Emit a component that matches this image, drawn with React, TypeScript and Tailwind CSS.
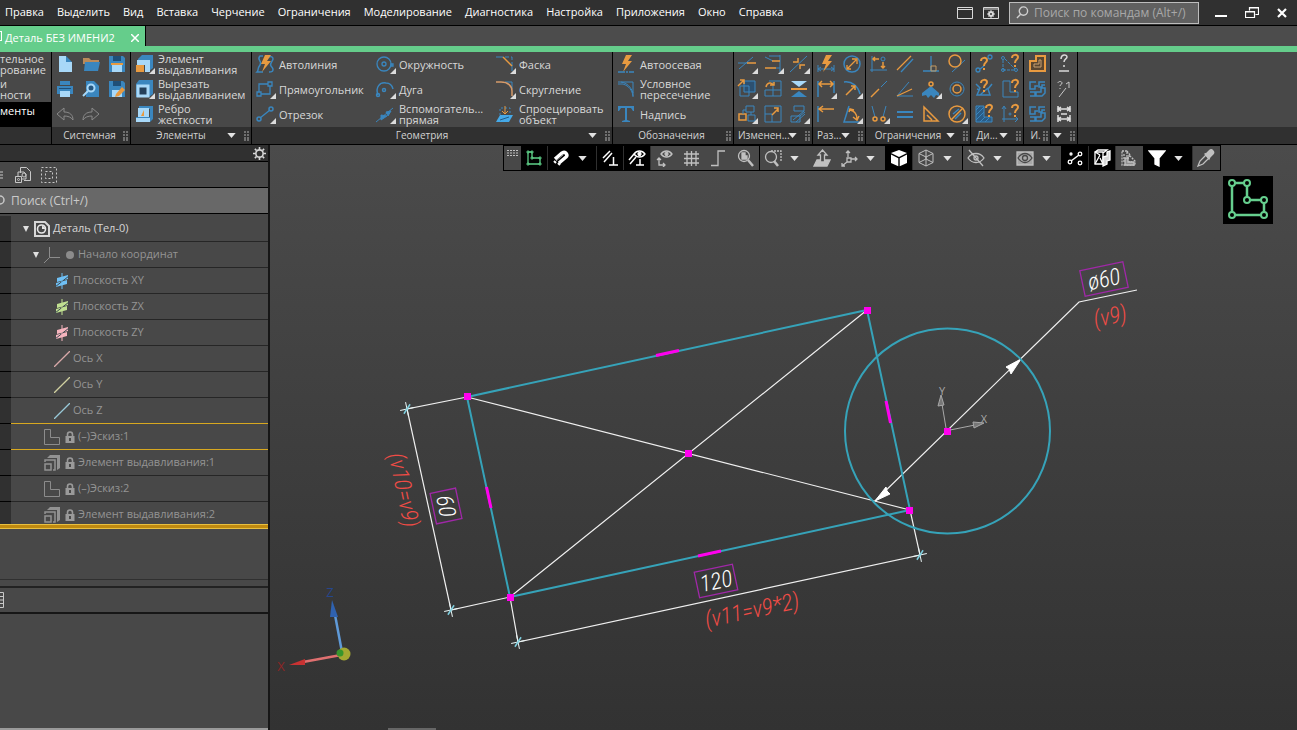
import { useState, type ReactNode } from "react";
import clsx from "clsx";

const BLUE = "#3a86be";
const ORANGE = "#e89a40";
const LIGHT = "#a8d8f8";

const MENU = [
  "Правка",
  "Выделить",
  "Вид",
  "Вставка",
  "Черчение",
  "Ограничения",
  "Моделирование",
  "Диагностика",
  "Настройка",
  "Приложения",
  "Окно",
  "Справка",
];

// Ribbon icons, drawn on a 24x24 grid
const bolt = <path d="M12 3h6l-4 6h4L9 20l3-8H8z" fill={ORANGE} stroke="none" />;
const ask = (
  <path d="M14 6c0-4 6-4 6-1 0 3-3 2-3 6M17 13v2" stroke={ORANGE} strokeWidth="2" />
);

const icons: Record<string, ReactNode> = {
  newFile: (
    <g stroke="none">
      <path d="M6 4h7v6h6v10H6z" fill={LIGHT} />
      <path d="M13 4l6 6h-6z" fill={BLUE} />
    </g>
  ),
  open: (
    <g stroke="none">
      <path d="M4 6h6l2 2h8v4H4z" fill="#b98a5a" />
      <path d="M6 10h15l-2 9H5z" fill={BLUE} />
    </g>
  ),
  save: (
    <g stroke="none">
      <path d="M4 4h14l2 2v14H4z" fill={BLUE} />
      <path d="M8 4h8v5H8z" fill="#1f4f78" />
      <path d="M7 13h10v7H7z" fill={LIGHT} />
      <path d="M6 11h12v2H6z" fill={ORANGE} />
    </g>
  ),
  print: (
    <g stroke="none">
      <path d="M7 4h10v4H7z" fill={BLUE} />
      <path d="M4 9h16v8H4z" fill={BLUE} />
      <path d="M6 11h12v1H6z" fill="#1f4f78" />
      <path d="M7 14h10v6H7z" fill={LIGHT} />
    </g>
  ),
  preview: (
    <g>
      <path d="M7 4h8l5 5v11H7z" fill={BLUE} stroke="none" />
      <circle cx="12" cy="11" r="3.5" fill="#26567e" stroke={LIGHT} strokeWidth="2" />
      <path d="M9 14l-5 5" stroke={LIGHT} strokeWidth="2" />
    </g>
  ),
  saveAs: (
    <g stroke="none">
      <path d="M4 4h14l2 2v14H4z" fill={BLUE} />
      <path d="M8 4h8v5H8z" fill="#1f4f78" />
      <path d="M7 13h10v7H7z" fill={LIGHT} />
      <path d="M11 17l6-7 3 3-6 6-4 1z" fill={ORANGE} />
    </g>
  ),
  undo: <path d="M4 12l7-6v4c6 0 9 3 9 8-2-3-5-4-9-4v4z" stroke="#8a8a8a" />,
  redo: <path d="M20 12l-7-6v4c-6 0-9 3-9 8 2-3 5-4 9-4v4z" stroke="#8a8a8a" />,
  extrude: (
    <g stroke="none">
      <path d="M6 7l4-4h11v13l-4 3V8H6z" fill={BLUE} />
      <path d="M5 8h13v12h-5v-7H5z" fill={LIGHT} />
      <path d="M4 13h8v7H4z" fill={ORANGE} />
    </g>
  ),
  cut: (
    <g>
      <path d="M4 7l3-4h14v14l-4 3H4z" fill={BLUE} stroke="none" />
      <rect x="6" y="9" width="10" height="10" fill="#24405a" stroke={LIGHT} strokeWidth="3" />
    </g>
  ),
  rib: (
    <g stroke="none">
      <path d="M7 4h14v13l-3 3V7H7z" fill={BLUE} />
      <path d="M6 6h11v9h1v5H4v-5h2z" fill={LIGHT} />
      <path d="M9 14l3-6v6z" fill={ORANGE} />
      <path d="M4 15h14v1H4z" fill={BLUE} />
    </g>
  ),
  autoline: (
    <g>
      <path d="M10 4H7c-4 4 3 5 0 9s-1 5-3 7h6M16 20c6 0 4-4 2-6s2-5 2-7-2-3-4-2" stroke={BLUE} strokeWidth="1.5" />
      {bolt}
    </g>
  ),
  rect: (
    <g stroke={BLUE} strokeWidth="1.3">
      <path d="M6 7h11v10H6z" />
      <path d="M4 15h4v4H4zM15 5h4v4h-4z" fill="#484848" />
    </g>
  ),
  segment: (
    <g stroke={BLUE} strokeWidth="1.5">
      <path d="M7 16l10-8" />
      <circle cx="6" cy="17" r="2" />
      <circle cx="18" cy="7" r="2" />
    </g>
  ),
  circle: (
    <g stroke={BLUE} strokeWidth="1.3">
      <circle cx="11" cy="12" r="7" />
      <circle cx="11" cy="12" r="2" />
      <path d="M18 12h2v2h-2z" />
    </g>
  ),
  arc: (
    <g stroke={BLUE} strokeWidth="1.5">
      <path d="M5 18c-3-8 2-13 8-12 4 0 6 2 7 6" />
      <circle cx="5" cy="18" r="1.5" />
      <circle cx="11" cy="13" r="1.5" />
    </g>
  ),
  auxLine: (
    <g stroke={BLUE}>
      <path d="M3 20L20 6" />
      <path d="M8 13l6 1-6 4zM13 10l5-1-3 5z" fill={BLUE} />
    </g>
  ),
  chamfer: (
    <g>
      <path d="M12 5h7v10" stroke={BLUE} strokeDasharray="4 2" />
      <path d="M3 5h7M19 14v5" stroke={BLUE} />
      <path d="M10 5l9 9" stroke={ORANGE} strokeWidth="1.5" />
    </g>
  ),
  fillet: (
    <g>
      <path d="M12 5h7v7" stroke={BLUE} />
      <path d="M3 5h5c7 0 11 4 11 9v5" stroke="#d59a6a" strokeWidth="1.5" />
    </g>
  ),
  project: (
    <g>
      <path d="M7 13V6h10v6" stroke={BLUE} strokeDasharray="2 2" />
      <path d="M7 13h13l-4 7H3z" fill="#45a9e8" stroke="none" />
      <path d="M12 4v8M9 9l3 3 3-3" stroke={ORANGE} />
      <path d="M7 18l9-3" stroke="#205a86" />
    </g>
  ),
  autoAxis: (
    <g>
      {bolt}
      <path d="M4 20h16" stroke={BLUE} strokeWidth="1.5" strokeDasharray="7 1 2 1" />
    </g>
  ),
  crossing: (
    <g stroke={BLUE}>
      <path d="M4 5h15v15M4 7h5c6 2 9 6 10 12M7 5c6 1 10 5 12 11" />
    </g>
  ),
  text: <path d="M4 4h16v5h-1l-2-3h-4v12l3 1v1H8v-1l3-1V6H7L5 9H4z" fill={BLUE} stroke="none" />,
  trim: (
    <g>
      <path d="M4 17L18 5M3 11h10" stroke={BLUE} />
      <path d="M12 11h9" stroke={ORANGE} strokeWidth="1.5" />
    </g>
  ),
  extend: (
    <g>
      <path d="M4 5l8 4M19 3v17" stroke={BLUE} />
      <path d="M11 9h8M4 16h11" stroke={ORANGE} strokeWidth="1.5" />
      <path d="M15 16h4M8 4h11" stroke={BLUE} />
    </g>
  ),
  split: (
    <g>
      <path d="M3 20L20 4" stroke={BLUE} />
      <path d="M6 10h5V6M13 17v-4h5" stroke={ORANGE} strokeWidth="1.5" />
    </g>
  ),
  scaleCopy: (
    <g>
      <path d="M9 4h11v11H9z" fill="#2c5070" stroke={BLUE} />
      <path d="M5 9h9v10H5z" stroke={BLUE} />
      <path d="M3 9l6-6M5 3h4v4" stroke={ORANGE} strokeWidth="1.5" />
    </g>
  ),
  mirrorCopy: (
    <g>
      <path d="M8 4h12v15H4v-6h16M12 5v14" stroke={BLUE} />
      <path d="M5 10c1-5 6-5 7-2M9 8h4V5" stroke={ORANGE} strokeWidth="1.5" />
    </g>
  ),
  mirror: (
    <g stroke="none">
      <path d="M4 4h16l-8 6z" fill={LIGHT} />
      <path d="M4 20h16l-8-6z" fill={BLUE} />
      <path d="M4 11h16v2H4z" fill={ORANGE} />
    </g>
  ),
  copy: (
    <g>
      <path d="M11 4h8v6h-8zM13 13h7v6h-7z" stroke={BLUE} />
      <path d="M4 12h7v6H4z" stroke={ORANGE} strokeWidth="1.5" />
      <path d="M8 12V8h3M16 10v3" stroke={BLUE} />
    </g>
  ),
  scale: (
    <g>
      <path d="M4 4h16v16H4zM4 12h7v8" stroke={BLUE} />
      <path d="M11 13l6-6M13 6h4v4" stroke={ORANGE} strokeWidth="1.5" />
    </g>
  ),
  deform: (
    <g stroke={BLUE}>
      <path d="M7 4h10v5H7zM4 14h9v6H4zM17 9L6 18M18 12L9 20M13 14l5-4" />
    </g>
  ),
  autoDim: (
    <g>
      <path d="M4 13v7M20 13v7M4 17h16M7 15l-3 2 3 2M17 15l3 2-3 2" stroke={BLUE} />
      {bolt}
    </g>
  ),
  diameter: (
    <g>
      <circle cx="12" cy="12" r="8" stroke={BLUE} strokeWidth="1.5" />
      <path d="M7 17l9-9M12 7h5v5M7 13v4h4" stroke={ORANGE} strokeWidth="1.3" />
    </g>
  ),
  linearDim: (
    <g>
      <path d="M4 4v16M20 4v12" stroke={BLUE} strokeWidth="1.5" />
      <path d="M5 7h14M8 4L5 7l3 3M16 4l3 3-3 3" stroke={ORANGE} strokeWidth="1.5" />
    </g>
  ),
  radialDim: (
    <g>
      <path d="M4 5c8-1 14 4 16 12" stroke={BLUE} strokeWidth="1.5" />
      <path d="M6 18l9-9M11 9h4v4" stroke={ORANGE} strokeWidth="1.5" />
    </g>
  ),
  heightDim: (
    <g>
      <path d="M4 4v16" stroke={BLUE} strokeWidth="1.5" />
      <path d="M5 7h15M9 4L5 7l4 3" stroke={ORANGE} strokeWidth="1.5" />
    </g>
  ),
  angleDim: (
    <g>
      <path d="M9 4L4 20h15" stroke={BLUE} strokeWidth="1.5" />
      <path d="M10 8c5 1 7 5 7 9M9 10l1-3 4 1M13 15l4 3 2-4" stroke={ORANGE} strokeWidth="1.5" />
    </g>
  ),
  alignPoints: (
    <g>
      <path d="M5 4v16M3 18h17" stroke={BLUE} />
      <path d="M6 7h6M8 5L6 7l2 2M16 10v6M14 14l2 2 2-2" stroke={ORANGE} strokeWidth="1.5" />
      <circle cx="16" cy="7" r="2" stroke={BLUE} />
    </g>
  ),
  parallel: (
    <g>
      <path d="M4 18L18 4" stroke={ORANGE} strokeWidth="1.3" />
      <path d="M8 20L20 7" stroke={BLUE} strokeWidth="1.3" />
    </g>
  ),
  perpendicular: (
    <g>
      <path d="M12 4v15M4 19h16" stroke={BLUE} strokeWidth="1.3" />
      <path d="M12 14h5v5h-5z" stroke="#c49a60" />
    </g>
  ),
  tangent: (
    <g>
      <path d="M7 20L20 8" stroke={BLUE} />
      <circle cx="10" cy="9" r="6" stroke={ORANGE} strokeWidth="1.5" />
    </g>
  ),
  collinear: (
    <g>
      <path d="M4 20l7-7M14 10l6-6" stroke={BLUE} />
      <path d="M4 20l8-8" stroke={ORANGE} strokeWidth="1.5" />
    </g>
  ),
  bisector: (
    <g>
      <path d="M4 19L16 5M4 19h16" stroke={BLUE} />
      <path d="M4 19l15-7" stroke={ORANGE} strokeWidth="1.3" />
    </g>
  ),
  fix: (
    <g>
      <path d="M12 9l8 7v3l-3-1-2 3-3-3-3 3-2-3-4 1v-3z" fill={BLUE} stroke="none" />
      <circle cx="12" cy="7" r="2" stroke={ORANGE} strokeWidth="1.5" />
    </g>
  ),
  concentric: (
    <g>
      <circle cx="12" cy="12" r="7" stroke={BLUE} />
      <circle cx="12" cy="12" r="4" stroke={ORANGE} strokeWidth="1.5" />
    </g>
  ),
  merge: (
    <g>
      <path d="M5 4l3 11M19 4l-3 11" stroke={BLUE} />
      <circle cx="8" cy="17" r="2" stroke={ORANGE} strokeWidth="1.5" />
      <circle cx="16" cy="17" r="2" stroke={ORANGE} strokeWidth="1.5" />
    </g>
  ),
  equal: <path d="M4 10h16M4 15h16" stroke={BLUE} strokeWidth="2" />,
  angleFix: <path d="M5 5v14h14zM8 13l5 5" stroke={ORANGE} strokeWidth="1.5" />,
  disable: (
    <g>
      <circle cx="12" cy="12" r="8" stroke={ORANGE} strokeWidth="1.5" />
      <path d="M8 12l6-5M10 17l6-6" stroke={BLUE} strokeWidth="1.5" />
      <path d="M6 18L18 6" stroke={ORANGE} strokeWidth="1.5" />
    </g>
  ),
  diag1: (
    <g>
      <g stroke={BLUE} strokeWidth="1.3">
        <circle cx="6" cy="18" r="2" />
        <circle cx="18" cy="5" r="2" />
        <path d="M8 17l4-3" />
      </g>
      <path d="M9 9c0-4 6-4 6-1 0 3-3 2-3 6M12 16v2" stroke={ORANGE} strokeWidth="2" />
    </g>
  ),
  diag2: (
    <g>
      <path d="M5 8v10M7 7l10 10M5 18h12" stroke={BLUE} strokeDasharray="3 1" />
      <g stroke={BLUE}>
        <circle cx="5" cy="6" r="1.5" />
        <circle cx="5" cy="18" r="1.5" />
        <circle cx="18" cy="18" r="1.5" />
      </g>
      {ask}
    </g>
  ),
  diag3: (
    <g>
      <path d="M4 7l4 4-3 7h13l-2-6 4-5M8 13l-3-1M8 18l8-7" stroke={BLUE} strokeWidth="1.5" />
      <path d="M9 6c0-4 6-4 6-1 0 3-3 2-3 6M12 13v2" stroke={ORANGE} strokeWidth="2" />
    </g>
  ),
  diag4: (
    <g>
      <path d="M5 4h7v11h8v5H5z" stroke={BLUE} />
      {ask}
    </g>
  ),
  diag5: (
    <g>
      <path d="M4 4h8v11h8v5H4z" fill="#2a5c86" stroke={BLUE} />
      <path d="M4 8l4-4M4 13l8-8M4 18l8-8M8 20l5-5M13 20l4-4" stroke={BLUE} />
      {ask}
    </g>
  ),
  diag6: (
    <g>
      <path d="M6 5v15M4 17h16M17 14l3 3-3 3M4 7l2-3 2 3" stroke={BLUE} />
      <circle cx="12" cy="12" r="1" stroke={BLUE} />
      {ask}
    </g>
  ),
  info1: (
    <g>
      <path d="M5 9h6V4h9v15H5z" fill="#5a4630" stroke={ORANGE} strokeWidth="2" />
      <path d="M9 15v-3h5V8h2v7z" stroke="#c9a070" />
    </g>
  ),
  info2: (
    <g stroke={BLUE} strokeWidth="1.5">
      <path d="M11 5H5v7h5V9h3M20 5h-6v5h3V8h3M5 15h5v4H5M20 11h-4v4h-5v4h6l3-3z" />
    </g>
  ),
  mark1: <path d="M9 7c0-5 6-5 6-2 0 2-3 2-3 5M12 13v2M7 19h10" stroke="#d8d8d8" strokeWidth="1.5" />,
  mark2: <path d="M6 6c0-2 4-2 4 0s-2 1-2 3M8 11v1M14 7l3-2v6M7 20l7-9" stroke="#c8c8c8" />,
  mark3: (
    <path d="M6 4v6M18 4v6M6 7h12M9 5L6 7l3 2M15 5l3 2-3 2M6 13v7M18 13v7M6 17h12M9 15l-3 2 3 2M15 15l3 2-3 2M9 12h6" stroke="#e0e0e0" strokeWidth="1.5" />
  ),
};

function RibbonIcon({ name, more = false }: { name: string; more?: boolean }) {
  return (
    <svg viewBox="0 0 24 24" className="h-6 w-6 shrink-0" fill="none" aria-hidden="true">
      {icons[name]}
      {more && <path d="M17 22h6v-6z" fill="#dcdcdc" />}
    </svg>
  );
}

function Caret() {
  return (
    <svg viewBox="0 0 10 6" className="h-[5px] w-[9px] shrink-0" aria-hidden="true">
      <path d="M0 0h10L5 6z" fill="#e2e2e2" />
    </svg>
  );
}

function Grip() {
  return (
    <svg viewBox="0 0 5 10" className="h-[10px] w-[5px] shrink-0" aria-hidden="true">
      <path d="M0 1h2M3 1h2M0 4h2M3 4h2M0 7h2M3 7h2M0 9h2M3 9h2" stroke="#b0b0b0" />
    </svg>
  );
}

interface GroupProps {
  label: string;
  menu?: boolean;
  children: ReactNode;
}

function Group({ label, menu = false, children }: GroupProps) {
  return (
    <section className="flex shrink-0 flex-col border-r border-black">
      <div className="h-[75px]">{children}</div>
      <footer className="flex h-[17px] items-center bg-[#303030] pr-[2px] text-[10px] text-[#d2d2d2]">
        {label && <span className="w-0 min-w-0 flex-1 pl-1 text-center whitespace-nowrap">{label}</span>}
        {menu && (
          <button aria-label={label || "Меню"} className="mr-2 ml-auto">
            <Caret />
          </button>
        )}
        <Grip />
      </footer>
    </section>
  );
}

// [icon, has drop-down corner, label]
type Tool = [string, boolean, string];

function IconGrid({ tools, className }: { tools: Tool[]; className: string }) {
  return (
    <div className={clsx("grid grid-rows-3", className)}>
      {tools.map(([icon, more, label]) => (
        <button key={label} aria-label={label} className="flex h-[25px] w-[26px] items-center justify-center pb-px">
          <RibbonIcon name={icon} more={more} />
        </button>
      ))}
    </div>
  );
}

function ToolList({ tools }: { tools: Tool[] }) {
  return (
    <div className="grid auto-cols-[120px] grid-flow-col grid-rows-3">
      {tools.map(([icon, more, label]) => (
        <button
          key={label}
          className="flex h-[25px] items-center gap-[2px] pb-px pl-px text-left text-[11px] leading-[11px] whitespace-pre text-[#d8d8d8]"
        >
          <RibbonIcon name={icon} more={more} />
          {label}
        </button>
      ))}
    </div>
  );
}

function Ribbon() {
  return (
    <div className="flex overflow-hidden border-b border-black bg-[#484848]">
      <section className="flex w-[52px] shrink-0 flex-col items-stretch border-r border-black text-[11px] leading-[11px] text-[#d8d8d8]">
        <button className="flex h-[25px] flex-col items-start justify-center pb-px">
          <span>тельное</span>
          <span>рование</span>
        </button>
        <button className="flex h-[25px] flex-col items-start justify-center pb-px">
          <span>и</span>
          <span>ности</span>
        </button>
        <button className="flex h-[25px] items-center bg-black pb-2 text-white">менты</button>
        <div className="h-[17px] bg-[#303030]" />
      </section>

      <Group label="Системная">
        <IconGrid
          className="grid-cols-3"
          tools={[
            ["newFile", false, "Создать"],
            ["open", false, "Открыть"],
            ["save", false, "Сохранить"],
            ["print", false, "Печать"],
            ["preview", false, "Предварительный просмотр"],
            ["saveAs", false, "Сохранить как"],
            ["undo", false, "Отменить"],
            ["redo", false, "Повторить"],
          ]}
        />
      </Group>
      <Group label="Элементы" menu>
        <ToolList
          tools={[
            ["extrude", true, "Элемент\nвыдавливания"],
            ["cut", true, "Вырезать\nвыдавливанием"],
            ["rib", false, "Ребро\nжесткости"],
          ]}
        />
      </Group>
      <Group label="Геометрия" menu>
        <ToolList
          tools={[
            ["autoline", false, "Автолиния"],
            ["rect", true, "Прямоугольник"],
            ["segment", true, "Отрезок"],
            ["circle", true, "Окружность"],
            ["arc", true, "Дуга"],
            ["auxLine", true, "Вспомогатель...\nпрямая"],
            ["chamfer", true, "Фаска"],
            ["fillet", true, "Скругление"],
            ["project", false, "Спроецировать\nобъект"],
          ]}
        />
      </Group>
      <Group label="Обозначения">
        <ToolList
          tools={[
            ["autoAxis", false, "Автоосевая"],
            ["crossing", false, "Условное\nпересечение"],
            ["text", false, "Надпись"],
          ]}
        />
      </Group>
      <Group label="Изменен..." menu>
        <IconGrid
          className="grid-cols-3"
          tools={[
            ["trim", true, "Усечь кривую"],
            ["extend", true, "Удлинить"],
            ["split", true, "Разбить"],
            ["scaleCopy", true, "Переместить"],
            ["mirrorCopy", false, "Повернуть"],
            ["mirror", false, "Зеркально отразить"],
            ["copy", true, "Копия"],
            ["scale", false, "Масштабировать"],
            ["deform", true, "Деформация"],
          ]}
        />
      </Group>
      <Group label="Раз..." menu>
        <IconGrid
          className="grid-cols-2"
          tools={[
            ["autoDim", false, "Авторазмер"],
            ["diameter", false, "Диаметральный размер"],
            ["linearDim", true, "Линейный размер"],
            ["radialDim", true, "Радиальный размер"],
            ["heightDim", false, "Размер высоты"],
            ["angleDim", true, "Угловой размер"],
          ]}
        />
      </Group>
      <Group label="Ограничения" menu>
        <IconGrid
          className="grid-cols-4"
          tools={[
            ["alignPoints", false, "Выравнивание"],
            ["parallel", false, "Параллельность"],
            ["perpendicular", false, "Перпендикулярность"],
            ["tangent", false, "Касание"],
            ["collinear", false, "Коллинеарность"],
            ["bisector", false, "Биссектриса"],
            ["fix", true, "Фиксация"],
            ["concentric", false, "Концентричность"],
            ["merge", true, "Объединить точки"],
            ["equal", false, "Равенство"],
            ["angleFix", false, "Фиксировать угол"],
            ["disable", true, "Отключить"],
          ]}
        />
      </Group>
      <Group label="Ди..." menu>
        <IconGrid
          className="grid-cols-2"
          tools={[
            ["diag1", false, "Расстояние"],
            ["diag2", false, "Угол"],
            ["diag3", false, "Длина кривой"],
            ["diag4", false, "Периметр"],
            ["diag5", false, "Площадь"],
            ["diag6", false, "Координаты"],
          ]}
        />
      </Group>
      <Group label="И.">
        <IconGrid
          className="grid-cols-1"
          tools={[
            ["info1", false, "Контур"],
            ["info2", false, "Спроецировать контур"],
            ["info2", false, "Скопировать контур"],
          ]}
        />
      </Group>
      <Group label="" menu>
        <IconGrid
          className="grid-cols-1"
          tools={[
            ["mark1", false, "Проверка"],
            ["mark2", false, "Переменные"],
            ["mark3", false, "Размеры"],
          ]}
        />
      </Group>
      <div className="flex flex-1 flex-col">
        <div className="h-[75px]" />
        <div className="h-[17px] bg-[#303030]" />
      </div>
    </div>
  );
}

const planeIcon = (color: string) => (
  <svg viewBox="0 0 16 16" className="h-4 w-4" aria-hidden="true">
    <path d="M3 5l11-3v4L3 9zM2 10l11-3v4L2 14z" fill={color} />
    <path d="M1 14L15 3" stroke="#3c4a52" />
    <path d="M8 0v16" stroke={color} />
  </svg>
);

const axisIcon = (color: string) => (
  <svg viewBox="0 0 16 16" className="h-4 w-4" aria-hidden="true">
    <path d="M0 16L16 0" stroke={color} strokeWidth="1.3" />
  </svg>
);

const sketchIcon = (
  <svg viewBox="0 0 16 16" className="h-4 w-4" fill="none" aria-hidden="true">
    <path d="M.5.5h6v8h9v7H.5z" stroke="#8c8c8c" />
  </svg>
);

const solidIcon = (
  <svg viewBox="0 0 16 16" className="h-4 w-4" fill="none" aria-hidden="true">
    <path d="M3 3l3-3h10v13l-3 2V3z" fill="#929292" />
    <path d="M1 7V5h10v10H9" stroke="#929292" strokeWidth="1.500" />
    <path d="M1 9h6v6H1z" stroke="#929292" strokeWidth="1.500" />
  </svg>
);

const lockIcon = (
  <svg viewBox="0 0 10 12" className="h-3 w-[10px]" aria-hidden="true">
    <path d="M2.500 6V3.500a2.500 2.500 0 015 0V6" fill="none" stroke="#9a9a9a" strokeWidth="1.600" />
    <rect x="0.500" y="5" width="9" height="7" fill="#9a9a9a" />
    <rect x="4" y="7" width="2" height="3" fill="#484848" />
  </svg>
);

const partIcon = (
  <svg viewBox="0 0 16 16" className="h-4 w-4" fill="none" aria-hidden="true">
    <path d="M1 1h10l4 4v10H1z" stroke="#d8d8d8" strokeWidth="2" />
    <circle cx="7.500" cy="8" r="4" stroke="#e8e8e8" strokeWidth="1.600" />
    <path d="M8 8V5a3 3 0 013 3z" fill="#e8e8e8" />
  </svg>
);

const originIcon = (
  <svg viewBox="0 0 16 16" className="h-4 w-4" fill="none" aria-hidden="true">
    <path d="M5.500 0v10.500H16M5.500 10.500L0 16" stroke="#8c8c8c" />
  </svg>
);

interface Node {
  label: string;
  indent: string;
  icon: ReactNode;
  open?: boolean;
  mark?: ReactNode;
  bright?: boolean;
  underline?: boolean;
}

const TREE: Node[] = [
  { label: "Деталь (Тел-0)", indent: "pl-3", icon: partIcon, open: true, bright: true },
  {
    label: "Начало координат",
    indent: "pl-[22px]",
    icon: originIcon,
    open: true,
    mark: <span className="mx-px h-2 w-2 rounded-full bg-[#8c8c8c]" />,
  },
  { label: "Плоскость XY", indent: "pl-[43px]", icon: planeIcon("#6fc0f5") },
  { label: "Плоскость ZX", indent: "pl-[43px]", icon: planeIcon("#c0e090") },
  { label: "Плоскость ZY", indent: "pl-[43px]", icon: planeIcon("#f5b4be") },
  { label: "Ось X", indent: "pl-[43px]", icon: axisIcon("#d8a8a8") },
  { label: "Ось Y", indent: "pl-[43px]", icon: axisIcon("#d0d0a0") },
  { label: "Ось Z", indent: "pl-[43px]", icon: axisIcon("#98c8d8"), underline: true },
  { label: "(–)Эскиз:1", indent: "pl-[33px]", icon: sketchIcon, mark: lockIcon, underline: true },
  { label: "Элемент выдавливания:1", indent: "pl-[33px]", icon: solidIcon, mark: lockIcon },
  { label: "(–)Эскиз:2", indent: "pl-[33px]", icon: sketchIcon, mark: lockIcon },
  { label: "Элемент выдавливания:2", indent: "pl-[33px]", icon: solidIcon, mark: lockIcon },
];

function TreePanel() {
  return (
    <aside className="flex w-[270px] shrink-0 flex-col border-r-2 border-[#161616] bg-[#484848]">
      <div className="flex h-[17px] items-center justify-end border-b border-black bg-[#303030]">
        <button aria-label="Настройка панели">
          <svg viewBox="0 0 16 16" className="mr-[2px] h-[13px] w-[13px]" fill="none" aria-hidden="true">
            <circle cx="8" cy="8" r="4.500" stroke="#d8d8d8" strokeWidth="2" />
            <path d="M8 0v3M8 13v3M0 8h3M13 8h3M2.300 2.300l2 2M11.700 11.700l2 2M2.300 13.700l2-2M11.700 4.300l2-2" stroke="#d8d8d8" strokeWidth="2" />
          </svg>
        </button>
      </div>
      <div className="flex h-[26px] items-center gap-[10px] border-b border-black">
        <svg viewBox="0 0 5 10" className="h-[10px] w-[5px]" aria-hidden="true">
          <path d="M0 2h3M0 5h3M0 8h3" stroke="#c8c8c8" />
        </svg>
        <svg viewBox="0 0 16 16" className="h-4 w-4" fill="none" stroke="#c8c8c8" aria-hidden="true">
          <path d="M5.500 6V.5h6l4 4v9H9M.5 9.500h6v6h-6zM3 9V5h6l2 2v5H7" />
          <circle cx="9" cy="8" r="2" />
          <circle cx="3.500" cy="12.500" r="1" />
        </svg>
        <svg viewBox="0 0 16 16" className="h-4 w-4" fill="none" stroke="#c8c8c8" strokeDasharray="2 2" aria-hidden="true">
          <path d="M.5.5h15v15H.5zM4.500 4.500h7v7h-7z" />
        </svg>
      </div>
      <div className="flex h-[26px] items-center border-b border-black bg-[#686868]">
        <svg viewBox="0 0 6 12" className="h-3 w-[6px]" fill="none" aria-hidden="true">
          <circle cx="0" cy="5" r="4" stroke="#c8c8c8" strokeWidth="1.500" />
        </svg>
        <input
          aria-label="Поиск в дереве"
          placeholder="Поиск (Ctrl+/)"
          className="min-w-0 flex-1 bg-transparent pl-[5px] text-xs text-white outline-none placeholder:text-[#cacaca]"
        />
      </div>

      <ul className="mt-[2px] h-[308px] shrink-0 overflow-hidden text-[11px]">
        {TREE.map((node) => (
          <li key={node.label} className="flex h-[26px]">
            <span className="w-[11px] border-b border-black bg-[#303030]" />
            <div
              className={clsx(
                "flex flex-1 items-center whitespace-nowrap border-b",
                node.indent,
                node.underline ? "border-[#d8a820]" : "border-[#262626]",
                node.bright ? "text-[#d6d6d6]" : "text-[#949494]",
              )}
            >
              {node.open && (
                <svg viewBox="0 0 6 6" className="mr-[5px] h-[6px] w-[6px]" aria-hidden="true">
                  <path d="M0 0h6L3 6z" fill="#e0e0e0" />
                </svg>
              )}
              {node.icon}
              {node.mark && <span className="ml-[5px] flex">{node.mark}</span>}
              <span className="pl-[3px]">{node.label}</span>
            </div>
          </li>
        ))}
      </ul>
      <div className="h-[5px] border-y border-[#e8c040] bg-[#c08a10]" />
      <div className="h-[51px] border-b border-[#303030]" />
      <div className="h-2 border-b-2 border-[#222]" />
      <div className="flex h-[26px] items-center border-b-2 border-[#161616]">
        <svg viewBox="0 0 4 16" className="h-4 w-1" fill="none" stroke="#c8c8c8" aria-hidden="true">
          <path d="M0 .5h3.500v15H0M0 4.500h3M0 8h3M0 11.500h3" />
        </svg>
      </div>
      <div className="flex-1" />
      <div className="h-[2px] bg-[#9a9a9a]" />
    </aside>
  );
}

interface ViewToolProps {
  label: string;
  on?: boolean;
  caret?: boolean;
  end?: boolean;
  children: ReactNode;
}

function ViewTool({ label, on = false, caret = false, end = false, children }: ViewToolProps) {
  return (
    <button
      aria-label={label}
      className={clsx(
        "flex h-full shrink-0 items-center gap-2 pl-1",
        caret ? "w-[49px]" : "w-[27px]",
        on ? "bg-black" : "bg-[#484848]",
        on && "border-r border-[#303030]",
        end && "mr-px",
      )}
    >
      <svg
        viewBox="0 0 18 18"
        className="h-[18px] w-[18px] shrink-0"
        fill="none"
        stroke={on ? "#ffffff" : "#c0c0c0"}
        strokeWidth="1.3"
        aria-hidden="true"
      >
        {children}
      </svg>
      {caret && <Caret />}
    </button>
  );
}

function ViewToolbar() {
  return (
    <div className="flex h-[26px] border border-black bg-black">
      <div className="flex w-[17px] justify-center bg-[#484848] pt-1">
        <svg viewBox="0 0 12 6" className="h-[6px] w-3" aria-hidden="true">
          <path d="M0 .5h12M0 3h12M0 5.500h12" stroke="#c0c0c0" strokeDasharray="2 1" />
        </svg>
      </div>
      <ViewTool label="Режим эскиза" on>
        <g stroke="#5ecf88">
          <path d="M3 3h4v6h8v6H3z" />
          <path d="M2 2h2v2H2zM6 2h2v2H6zM6 8h2v2H6zM14 8h2v2h-2zM14 14h2v2h-2zM2 14h2v2H2z" strokeWidth="0.8" />
        </g>
      </ViewTool>
      <ViewTool label="Привязки" on caret>
        <path d="M3 10l7-6c4-2 6 2 4 4l-7 6" strokeWidth="3.500" />
        <path d="M4 12l7-6" stroke="#9a9a9a" strokeWidth="1" />
        <path d="M2 12l2 2M6 14l2 2" stroke="#fff" strokeWidth="2" />
      </ViewTool>
      <ViewTool label="Ограничения" on>
        <path d="M2 9l7-7M3 13l8-9M8 16h9M12.500 8v8" strokeWidth="1.500" />
      </ViewTool>
      <ViewTool label="Показать ограничения" on>
        <path d="M6 5c3-4 8-4 11 0-3 4-8 4-11 0z" />
        <circle cx="11.500" cy="5" r="1.500" fill="#fff" />
        <path d="M1 11l5-6M2 15l6-7M8 16h8M12 10v6" strokeWidth="1.500" />
      </ViewTool>
      <ViewTool label="Показать степени свободы">
        <path d="M6 5c3-4 8-4 11 0-3 4-8 4-11 0z" />
        <circle cx="11.500" cy="5" r="1.500" fill="#c0c0c0" />
        <path d="M4 9v7h6M2 11l2-2 2 2M8 14l2 2-2 2" />
      </ViewTool>
      <ViewTool label="Сетка">
        <path d="M5 2v15M9.500 2v15M14 2v15M2 5h15M2 9.500h15M2 14h15" />
      </ViewTool>
      <ViewTool label="Ортогональность">
        <path d="M2 16.500h7V2h7" />
      </ViewTool>
      <ViewTool label="Показать все" end>
        <circle cx="8" cy="7" r="5.500" />
        <path d="M12 11l5 6" strokeWidth="2.500" />
        <path d="M6 4h3v3h2v3H6z" fill="#c0c0c0" />
      </ViewTool>
      <ViewTool label="Масштаб рамкой" caret>
        <circle cx="7" cy="8" r="5.500" />
        <path d="M10 12l4 5" strokeWidth="2.500" />
        <path d="M7 2h10v10" strokeDasharray="2 1" />
      </ViewTool>
      <ViewTool label="Нормально к">
        <path d="M4 11h13l-3 6H1z" fill="#c0c0c0" />
        <path d="M7.500 13V6H5l4.500-5L14 6h-2.500v7z" fill="#484848" />
      </ViewTool>
      <ViewTool label="Ориентация" caret end>
        <path d="M7 9h4v4H7zM8 8V2M6 4l2-2 2 2M11 10h6M15 8l2 2-2 2M7 13l-5 4M2 14v3h3" />
      </ViewTool>
      <ViewTool label="Полутоновое" on>
        <path d="M9 1l8 3-8 4-8-4zM1 5.500l7.300 3.800v8L1 14zM17 5.500L9.700 9.300v8L17 14z" fill="#fff" stroke="none" />
      </ViewTool>
      <ViewTool label="Каркас" caret end>
        <path d="M9 1l7 3.500v9L9 17l-7-3.500v-9zM2 4.500L9 8l7-3.500M9 8v9M9 1v9M9 10l-7 3.500M9 10l7 3.500" strokeWidth="1" />
      </ViewTool>
      <ViewTool label="Скрыть объекты" caret>
        <path d="M1 9c4-6 12-6 16 0-4 6-12 6-16 0zM2 1l14 16" />
        <circle cx="9" cy="9" r="2" />
      </ViewTool>
      <ViewTool label="Скрыть все" caret end>
        <path d="M1 3h16v13H1z" fill="#a8a8a8" />
        <path d="M2 9c4-6 10-6 14 0-4 6-10 6-14 0z" stroke="#484848" />
        <circle cx="9" cy="9" r="2.500" stroke="#484848" />
      </ViewTool>
      <ViewTool label="Характерные точки" on>
        <path d="M5 12l8-6" strokeWidth="1.500" />
        <circle cx="4" cy="13" r="1.800" />
        <circle cx="14" cy="5" r="1.800" />
        <circle cx="5" cy="5" r="1" />
        <circle cx="14" cy="14" r="1.800" />
      </ViewTool>
      <ViewTool label="Сечение" on>
        <path d="M2 3h8v12H2zM2 3l3-2h9l-4 3" />
        <path d="M2 15l5-9M7 6l-5-3M7 9l3 6" />
        <path d="M10 8l4-1V3l3-1v9l-3 1v3l-4 2z" fill="#d8d8d8" />
      </ViewTool>
      <ViewTool label="Упрощённое" end>
        <path d="M2 2h5v7h2V6l6 6v4H2zM7 2l3 4M4 5v8h8" strokeDasharray="2 1" />
        <path d="M5 9h3v4h6v3H5z" fill="#909090" />
      </ViewTool>
      <ViewTool label="Фильтр" on caret>
        <path d="M1 2h16l-6 7v8l-4-2V9z" fill="#fff" />
      </ViewTool>
      <ViewTool label="Пипетка">
        <path d="M1 17l2-5 6-6 3 3-6 6z" />
        <path d="M8 5l2-1 3-3c2-1 5 2 3 4l-3 3-1 2z" fill="#c0c0c0" />
      </ViewTool>
    </div>
  );
}

function Tick({ x, y }: { x: number; y: number }) {
  return (
    <g transform={`translate(${x} ${y}) rotate(-12)`}>
      <path d="M-7 0H7M0-7V7" stroke="#e8f4f4" />
      <path d="M-4 4L4-4" stroke="#7fd0e0" strokeWidth="1.500" />
    </g>
  );
}

interface DimensionProps {
  x: number;
  y: number;
  angle: number;
  value: string;
  width: number;
}

function Dimension({ x, y, angle, value, width }: DimensionProps) {
  return (
    <g transform={`translate(${x} ${y}) rotate(${angle})`}>
      <rect x={-width / 2} y={-13} width={width} height={26} fill="none" stroke="#a028a8" strokeWidth="1.300" />
      <text y="8" fontSize="23" textAnchor="middle" fill="#ffffff">
        {value}
      </text>
    </g>
  );
}

function Formula({ x, y, angle, value }: Omit<DimensionProps, "width">) {
  return (
    <text
      transform={`translate(${x} ${y}) rotate(${angle})`}
      y="8"
      fontSize="23"
      textAnchor="middle"
      fill="#f04c46"
    >
      {value}
    </text>
  );
}

function Sketch() {
  return (
    <svg
      viewBox="270 145 1027 585"
      preserveAspectRatio="xMidYMid meet"
      className="absolute inset-0 h-full w-full"
      fill="none"
      role="img"
      aria-label="Эскиз"
    >
      {/* dimension and construction lines */}
      <g stroke="#f0f0f0" strokeWidth="1.200">
        <path d="M467 397L910 510M867 310L510 597" />
        <path d="M467 397L407 409L451 610L510 597L518 642L920 555L910 510" />
        <path d="M875 501L1079 302L1137 290" />
      </g>
      <Tick x={407} y={409} />
      <Tick x={451} y={610} />
      <Tick x={518} y={642} />
      <Tick x={920} y={555} />
      <path d="M1021 359l-15 8 3 2 2 5zM875 501l15-7-3-3-1-4z" fill="#fff" stroke="#fff" />

      <g stroke="#36a3b9" strokeWidth="2">
        <path d="M467 397L867 310L910 510L510 597z" />
        <circle cx="947.500" cy="431" r="102.500" />
      </g>
      <path d="M656 355.500L679 350.500M886 401L890.500 423M486.500 487L491 508M698 556L721 551" stroke="#ff00ee" strokeWidth="3" />
      <g fill="#ff00ee">
        <rect x="464" y="393" width="7" height="7" />
        <rect x="864" y="307" width="7" height="7" />
        <rect x="906" y="507" width="7" height="7" />
        <rect x="507" y="594" width="7" height="7" />
        <rect x="685" y="450" width="7" height="7" />
        <rect x="944" y="428" width="7" height="7" />
      </g>

      <g className="font-['Roboto_Condensed',Roboto,sans-serif] font-light italic">
        <Dimension x={716} y={581} angle={-12} value="120" width={39} />
        <Dimension x={446} y={506} angle={78} value="60" width={31} />
        <Dimension x={1104} y={279} angle={-12} value="ø60" width={44} />
        <Formula x={752} y={610} angle={-12} value="(v11=v9*2)" />
        <Formula x={404} y={490} angle={78} value="(v10=v9)" />
        <Formula x={1110} y={316} angle={-12} value="(v9)" />
      </g>

      {/* sketch origin */}
      <g stroke="#a8a8a8">
        <path d="M946 428L941 398M950 430L980 424" />
        <path d="M941 395l-3 11 6-1zM984 423l-11-1 1 6z" fill="#777" />
      </g>
      <g fill="#a8a8a8" fontSize="11" textAnchor="middle">
        <text x="942" y="395">Y</text>
        <text x="984" y="423">X</text>
      </g>

      {/* view orientation triad */}
      <path d="M342 652L335 615" stroke="#5f9ad8" strokeWidth="2.500" />
      <path d="M332 600l-2 17h8z" fill="#2f62b0" />
      <path d="M341 655L303 662" stroke="#e07070" strokeWidth="2.500" />
      <path d="M289 665l16-6v6z" fill="#c83232" />
      <circle cx="344" cy="654" r="6.500" fill="#a3a832" />
      <circle cx="340" cy="653" r="3.500" fill="#38952c" />
      <g fontSize="13" textAnchor="middle">
        <text x="330" y="597" fill="#26468c">Z</text>
        <text x="281" y="671" fill="#8c2626">X</text>
      </g>
      <rect x="388" y="728" width="48" height="2" fill="#666666" />
    </svg>
  );
}

export default function App() {
  const [command, setCommand] = useState("");

  return (
    <div className="flex h-screen flex-col overflow-hidden bg-[#303030] font-['Open_Sans','Noto_Sans',sans-serif]">
      <header className="flex h-[26px] shrink-0 items-center border-b border-black pl-[5px] text-[11px] text-white">
        <nav className="flex flex-1 gap-[13px] overflow-hidden whitespace-nowrap">
          {MENU.map((item) => (
            <button key={item}>{item}</button>
          ))}
        </nav>
        <div className="flex shrink-0 items-center">
          <button aria-label="Окно" className="mr-[10px]">
            <svg viewBox="0 0 16 12" className="h-3 w-4" fill="none" stroke="#d8d8d8" aria-hidden="true">
              <path d="M.5.5h15v11H.5zM0 2.500h16" />
            </svg>
          </button>
          <button aria-label="Настройка интерфейса" className="mr-[10px]">
            <svg viewBox="0 0 16 12" className="h-3 w-4" fill="none" stroke="#d8d8d8" aria-hidden="true">
              <path d="M.5.5h15v11H.5zM0 2h16" />
              <circle cx="8" cy="7" r="2" strokeWidth="2" />
              <path d="M8 3v1.500M8 9.500V11M4 7h1.500M10.500 7H12M5.500 4.500l1 1M10.500 4.500l-1 1M5.500 9.500l1-1M10.500 9.500l-1-1" />
            </svg>
          </button>
          <div className="flex h-[22px] w-[190px] items-center border border-[#bdbdbd] bg-[#606060]">
            <svg viewBox="0 0 14 14" className="ml-[6px] h-[13px] w-[13px]" fill="none" stroke="#cfcfcf" strokeWidth="1.500" aria-hidden="true">
              <circle cx="8" cy="5.500" r="4.500" />
              <path d="M5 9l-4 4" />
            </svg>
            <input
              aria-label="Поиск по командам"
              value={command}
              onChange={(e) => setCommand(e.target.value)}
              placeholder="Поиск по командам (Alt+/)"
              className="min-w-0 flex-1 bg-transparent pl-[5px] text-xs outline-none placeholder:text-[#a8a8a8]"
            />
          </div>
          <button aria-label="Свернуть" className="ml-4">
            <svg viewBox="0 0 12 12" className="h-3 w-3" aria-hidden="true">
              <path d="M0 8h12v2H0z" fill="#fff" />
            </svg>
          </button>
          <button aria-label="Восстановить" className="ml-[18px]">
            <svg viewBox="0 0 14 12" className="h-3 w-[14px]" fill="none" stroke="#fff" aria-hidden="true">
              <path d="M4.500 3.500v-3h9v7h-3M4 1h10M.5 4.500h9v6h-9zM0 5h10" strokeWidth="1.200" />
            </svg>
          </button>
          <button aria-label="Закрыть" className="mr-[10px] ml-[18px]">
            <svg viewBox="0 0 10 10" className="h-[10px] w-[10px]" stroke="#fff" strokeWidth="2.200" aria-hidden="true">
              <path d="M1 1l8 8M9 1L1 9" />
            </svg>
          </button>
        </div>
      </header>

      <div className="flex h-[26px] shrink-0 items-stretch border-b-[6px] border-[#65cd8b] bg-[#4c4c4c]">
        <div className="flex items-center border-r border-black bg-[#65cd8b] pr-[6px] text-[11px] text-white">
          <span className="mr-[3px] h-[10px] w-[2px] border-y border-r border-white" />
          <span className="pt-1">Деталь БЕЗ ИМЕНИ2</span>
          <button aria-label="Закрыть вкладку" className="mt-[3px] ml-4">
            <svg viewBox="0 0 8 8" className="h-2 w-2" stroke="#fff" strokeWidth="1.500" aria-hidden="true">
              <path d="M0 0l8 8M8 0L0 8" />
            </svg>
          </button>
        </div>
      </div>

      <div className="shrink-0">
        <Ribbon />
      </div>

      <div className="flex min-h-0 flex-1">
        <TreePanel />
        <main className="relative min-w-0 flex-1 bg-linear-to-b from-[#4b4b4b] to-[#323232]">
          <Sketch />
          <div className="relative flex flex-col items-end">
            <div className="mr-[76px]">
              <ViewToolbar />
            </div>
            <button aria-label="Завершить эскиз" className="mt-[5px] mr-6 h-12 w-[50px] bg-black">
              <svg viewBox="0 0 50 48" className="h-full w-full" fill="none" stroke="#66cf8e" strokeWidth="2.500" aria-hidden="true">
                <path d="M9 7h15v17h17v15H9z" />
                <g fill="#000" strokeWidth="2">
                  <circle cx="9" cy="7" r="3" />
                  <circle cx="24" cy="7" r="3" />
                  <circle cx="24" cy="24" r="3" />
                  <circle cx="41" cy="24" r="3" />
                  <circle cx="41" cy="39" r="3" />
                  <circle cx="9" cy="39" r="3" />
                </g>
              </svg>
            </button>
          </div>
        </main>
      </div>
    </div>
  );
}
